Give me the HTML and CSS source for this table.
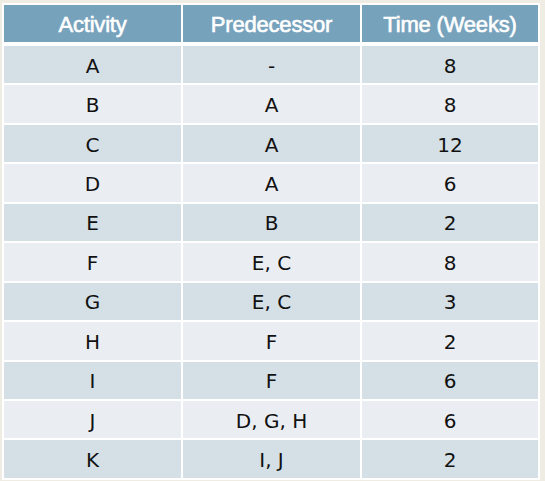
FILE: index.html
```html
<!DOCTYPE html>
<html>
<head>
<meta charset="utf-8">
<link rel="stylesheet" href="styles.css">
</head>
<body>
<table class="grid">
  <thead>
    <tr><th>Activity</th><th>Predecessor</th><th>Time (Weeks)</th></tr>
  </thead>
  <tbody>
    <tr class="odd"><td>A</td><td>-</td><td>8</td></tr>
    <tr class="even"><td>B</td><td>A</td><td>8</td></tr>
    <tr class="odd"><td>C</td><td>A</td><td>12</td></tr>
    <tr class="even"><td>D</td><td>A</td><td>6</td></tr>
    <tr class="odd"><td>E</td><td>B</td><td>2</td></tr>
    <tr class="even"><td>F</td><td>E, C</td><td>8</td></tr>
    <tr class="odd"><td>G</td><td>E, C</td><td>3</td></tr>
    <tr class="even"><td>H</td><td>F</td><td>2</td></tr>
    <tr class="odd"><td>I</td><td>F</td><td>6</td></tr>
    <tr class="even"><td>J</td><td>D, G, H</td><td>6</td></tr>
    <tr class="odd"><td>K</td><td>I, J</td><td>2</td></tr>
  </tbody>
</table>
</body>
</html>
```
FILE: styles.css
```css
html, body {
  margin: 0;
  padding: 0;
  background: #efece4;
}
body {
  padding: 3px 0 0 2px;
}
.grid {
  border-collapse: separate;
  border-spacing: 2px;
  background: #ffffff;
  table-layout: fixed;
}
.grid th, .grid td {
  padding: 0;
  text-align: center;
  vertical-align: middle;
}
.grid th {
  height: 34px;
  padding-top: 3px;
  background: #77a2bc;
  color: #ffffff;
  font-family: "Liberation Sans", Arial, sans-serif;
  font-weight: normal;
  font-size: 22px;
  line-height: 26px;
  border-bottom: 2px solid #ffffff;
  letter-spacing: -0.2px;
  -webkit-text-stroke: 0.6px #ffffff;
}
.grid th:nth-child(1), .grid td:nth-child(1) { width: 177px; }
.grid th:nth-child(2), .grid td:nth-child(2) { width: 177px; }
.grid th:nth-child(3), .grid td:nth-child(3) { width: 176px; }
.grid td {
  height: 35.45px;
  padding-top: 2px;
  font-family: "DejaVu Sans", Verdana, sans-serif;
  font-size: 20px;
  line-height: 24px;
  color: #111111;
}
.odd td { background: #d4dfe6; }
.even td { background: #eaeef2; }
```
